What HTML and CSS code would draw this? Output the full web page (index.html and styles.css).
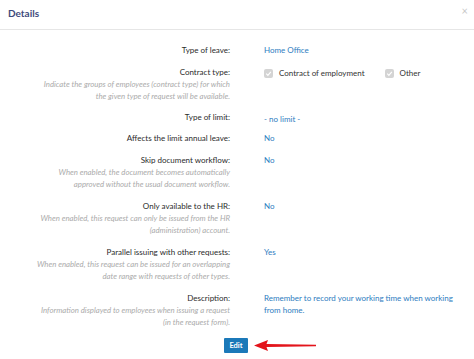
FILE: index.html
```html
<!DOCTYPE html>
<html>
<head>
<meta charset="utf-8">
<link rel="stylesheet" href="styles.css">
</head>
<body>
<div class="modal">
  <div class="modal-header">
    <h1 class="title">Details</h1>
    <span class="close">&times;</span>
  </div>
  <div class="modal-body">
    <div class="row r1">
      <div class="label">Type of leave:</div>
      <div class="value">Home Office</div>
    </div>
    <div class="row r2">
      <div class="label">Contract type:<div class="desc">Indicate the groups of employees (contract type) for which<br>the given type of request will be available.</div></div>
      <div class="value checks">
        <span class="check"><span class="box"><svg viewBox="0 0 10 10" width="9" height="9"><path d="M2.5 5.2 L4.3 7 L7.6 3.3" fill="none" stroke="#fff" stroke-width="1.3"/></svg></span>Contract of employment</span>
        <span class="check"><span class="box"><svg viewBox="0 0 10 10" width="9" height="9"><path d="M2.5 5.2 L4.3 7 L7.6 3.3" fill="none" stroke="#fff" stroke-width="1.3"/></svg></span>Other</span>
      </div>
    </div>
    <div class="row r3">
      <div class="label">Type of limit:</div>
      <div class="value low">- no limit -</div>
    </div>
    <div class="row r4">
      <div class="label">Affects the limit annual leave:</div>
      <div class="value">No</div>
    </div>
    <div class="row">
      <div class="label">Skip document workflow:<div class="desc">When enabled, the document becomes automatically<br>approved without the usual document workflow.</div></div>
      <div class="value">No</div>
    </div>
    <div class="row">
      <div class="label">Only available to the HR:<div class="desc">When enabled, this request can only be issued from the HR<br>(administration) account.</div></div>
      <div class="value">No</div>
    </div>
    <div class="row">
      <div class="label">Parallel issuing with other requests:<div class="desc">When enabled, this request can be issued for an overlapping<br>date range with requests of other types.</div></div>
      <div class="value">Yes</div>
    </div>
    <div class="row">
      <div class="label">Description:<div class="desc">Information displayed to employees when issuing a request<br>(in the request form).</div></div>
      <div class="value">Remember to record your working time when working from home.</div>
    </div>
    <div class="footer">
      <button class="btn">Edit</button>
      <svg class="arrow" viewBox="0 0 62 11" width="62" height="11"><polygon points="0,5.5 14,0 12.5,4 62,4.8 62,6.2 12.5,7 14,11" fill="#e3141b"/></svg>
    </div>
  </div>
</div>
</body>
</html>
```
FILE: styles.css
```css
html, body {
  margin: 0;
  padding: 0;
  background: #fff;
}
body {
  font-family: Lato, "Open Sans", sans-serif;
  width: 474px;
  height: 359px;
  overflow: hidden;
}
.modal-header {
  height: 29px;
  border-bottom: 1px solid #e6e6e6;
  display: flex;
  align-items: center;
  justify-content: space-between;
  padding: 0 6px 0 8px;
}
.title {
  margin: 0;
  font-size: 10px;
  font-weight: 700;
  color: #3e4a7c;
  position: relative;
  top: -2px;
}
.close {
  font-size: 11px;
  color: #c8c8c8;
  line-height: 1;
  position: relative;
  top: -4px;
}
.modal-body {
  padding: 14px 14px 0 35px;
}
.row {
  display: grid;
  grid-template-columns: 195px 1fr;
  column-gap: 34px;
  align-items: start;
  margin-bottom: 10px;
}
.row.r2 { margin-bottom: 9px; }
.row.r3 { margin-bottom: 7px; }
.label {
  text-align: right;
  font-size: 8px;
  line-height: 12px;
  color: #2b2b2b;
}
.desc {
  font-size: 7.8px;
  line-height: 12px;
  font-style: italic;
  color: #ababab;
  white-space: nowrap;
  text-align: right;
}
.value {
  font-size: 8px;
  line-height: 12px;
  color: #2d7cc0;
}
.value.low { padding-top: 2px; }
.checks {
  display: flex;
  align-items: center;
  gap: 20px;
  color: #333;
  padding-top: 1px;
}
.check {
  display: flex;
  align-items: center;
  gap: 6px;
}
.box {
  width: 9px;
  height: 9px;
  border-radius: 2px;
  background: #d4d4d4;
  display: flex;
}
.footer {
  position: relative;
  display: flex;
  justify-content: center;
  margin-left: -35px;
  margin-right: -14px;
  padding-right: 2px;
}
.btn {
  font-family: Lato, "Open Sans", sans-serif;
  font-weight: 700;
  font-size: 7.5px;
  color: #fff;
  background: #1b79b9;
  border: none;
  border-radius: 1px;
  width: 24px;
  height: 15px;
  padding: 0;
  line-height: 15px;
}
.arrow {
  position: absolute;
  left: 254px;
  top: 2px;
}
```
